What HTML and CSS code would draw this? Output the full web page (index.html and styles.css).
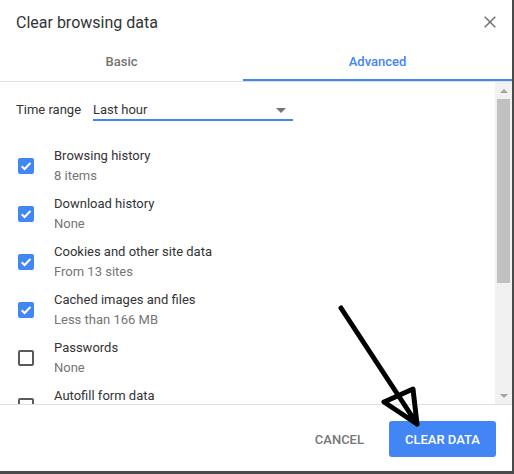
FILE: index.html
```html
<!DOCTYPE html>
<html>
<head>
<meta charset="utf-8">
<link rel="stylesheet" href="styles.css">
</head>
<body>
<div class="dialog">
  <div class="header">
    <span class="title">Clear browsing data</span>
    <svg class="close" width="12" height="12" viewBox="0 0 12 12"><path d="M0.7 0.7 L11.3 11.3 M11.3 0.7 L0.7 11.3" stroke="#757575" stroke-width="1.6" fill="none"/></svg>
  </div>
  <div class="tabs">
    <div class="tab basic">Basic</div>
    <div class="tab active">Advanced</div>
  </div>
  <div class="body">
    <div class="scroll">
      <div class="time-row">
        <span class="label">Time range</span>
        <div class="select"><span>Last hour</span><span class="caret"></span></div>
      </div>
      <div class="item">
        <span class="cb checked"><svg width="16" height="16" viewBox="0 0 16 16"><path d="M3.6 8.2 L6.6 11 L12.4 5" stroke="#fff" stroke-width="2" fill="none"/></svg></span>
        <div class="text"><div class="name">Browsing history</div><div class="sub">8 items</div></div>
      </div>
      <div class="item">
        <span class="cb checked"><svg width="16" height="16" viewBox="0 0 16 16"><path d="M3.6 8.2 L6.6 11 L12.4 5" stroke="#fff" stroke-width="2" fill="none"/></svg></span>
        <div class="text"><div class="name">Download history</div><div class="sub">None</div></div>
      </div>
      <div class="item">
        <span class="cb checked"><svg width="16" height="16" viewBox="0 0 16 16"><path d="M3.6 8.2 L6.6 11 L12.4 5" stroke="#fff" stroke-width="2" fill="none"/></svg></span>
        <div class="text"><div class="name">Cookies and other site data</div><div class="sub">From 13 sites</div></div>
      </div>
      <div class="item">
        <span class="cb checked"><svg width="16" height="16" viewBox="0 0 16 16"><path d="M3.6 8.2 L6.6 11 L12.4 5" stroke="#fff" stroke-width="2" fill="none"/></svg></span>
        <div class="text"><div class="name">Cached images and files</div><div class="sub">Less than 166 MB</div></div>
      </div>
      <div class="item">
        <span class="cb"></span>
        <div class="text"><div class="name">Passwords</div><div class="sub">None</div></div>
      </div>
      <div class="item">
        <span class="cb"></span>
        <div class="text"><div class="name">Autofill form data</div></div>
      </div>
    </div>
    <div class="scrollbar">
      <div class="sb-btn"><span class="tri up"></span></div>
      <div class="thumb"></div>
      <div class="track"></div>
      <div class="sb-btn"><span class="tri down"></span></div>
    </div>
  </div>
  <div class="footer">
    <button class="btn cancel">CANCEL</button>
    <button class="btn primary">CLEAR DATA</button>
  </div>
</div>
<svg class="annotation" width="514" height="474" viewBox="0 0 514 474">
  <path d="M341 308 L417 424 M417 424 L384 402 L413 389 Z" stroke="#000" stroke-width="5" fill="none" stroke-linecap="round" stroke-linejoin="round"/>
</svg>
</body>
</html>
```
FILE: styles.css
```css
html, body {
  margin: 0;
  padding: 0;
}
body {
  width: 514px;
  height: 474px;
  background: #4a4a4a;
  font-family: Roboto, "Liberation Sans", sans-serif;
  font-size: 13px;
  color: #333;
  overflow: hidden;
  position: relative;
}
.dialog {
  width: 512px;
  height: 471px;
  background: #fff;
  display: flex;
  flex-direction: column;
}
.header {
  height: 44px;
  display: flex;
  align-items: center;
  justify-content: space-between;
  padding: 0 16px;
  flex-shrink: 0;
}
.title {
  font-size: 16px;
  color: #333;
}
.close {
  display: block;
}
.tabs {
  height: 37px;
  display: flex;
  border-bottom: 1px solid #e0e0e0;
  flex-shrink: 0;
}
.tab {
  display: flex;
  align-items: center;
  justify-content: center;
  padding-bottom: 3px;
  box-sizing: border-box;
  font-weight: 500;
  color: #737373;
}
.tab.basic {
  width: 243px;
}
.tab.active {
  flex: 1;
  color: #4285f4;
  box-shadow: inset 0 -2px 0 #4285f4;
}
.body {
  height: 322px;
  display: flex;
  border-bottom: 1px solid #e0e0e0;
  flex-shrink: 0;
}
.scroll {
  flex: 1;
  overflow: hidden;
  padding-top: 16px;
}
.time-row {
  display: flex;
  padding-left: 16px;
  height: 23px;
}
.label {
  padding-top: 2px;
  line-height: 19px;
  width: 77px;
}
.select {
  width: 200px;
  box-sizing: border-box;
  padding-top: 2px;
  line-height: 19px;
  border-bottom: 2px solid #4285f4;
  display: flex;
  justify-content: space-between;
  align-items: center;
  padding-right: 7px;
}
.caret {
  width: 0;
  height: 0;
  border-left: 5px solid transparent;
  border-right: 5px solid transparent;
  border-top: 5px solid #757575;
  margin-top: 1px;
}
.item {
  display: flex;
  height: 48px;
  box-sizing: border-box;
  padding: 5px 0 3px;
}
.time-row + .item {
  margin-top: 20px;
}
.cb {
  width: 16px;
  height: 16px;
  box-sizing: border-box;
  border: 2px solid #5a5a5a;
  border-radius: 2px;
  margin: 12px 20px 0 18px;
  flex-shrink: 0;
  position: relative;
}
.cb.checked {
  background: #4285f4;
  border: none;
}
.cb svg {
  display: block;
}
.name {
  line-height: 20px;
  color: #333;
}
.sub {
  line-height: 20px;
  color: #757575;
}
.scrollbar {
  width: 17px;
  background: #f1f1f1;
  display: flex;
  flex-direction: column;
  align-items: center;
}
.sb-btn {
  height: 17px;
  width: 17px;
  display: flex;
  align-items: center;
  justify-content: center;
  flex-shrink: 0;
}
.tri {
  width: 0;
  height: 0;
  border-left: 4px solid transparent;
  border-right: 4px solid transparent;
}
.tri.up {
  border-bottom: 4px solid #a3a3a3;
}
.tri.down {
  border-top: 4px solid #a3a3a3;
}
.thumb {
  width: 13px;
  height: 184px;
  background: #c1c1c1;
}
.track {
  flex: 1;
}
.footer {
  flex: 1;
  display: flex;
  justify-content: flex-end;
  align-items: flex-start;
  padding: 16px 16px 0 0;
  gap: 9px;
}
.btn {
  font-family: Roboto, "Liberation Sans", sans-serif;
  font-size: 13px;
  font-weight: 500;
  height: 36px;
  padding: 0 16px;
  border: none;
  border-radius: 3px;
  background: transparent;
}
.btn.cancel {
  color: #757575;
}
.btn.primary {
  background: #4285f4;
  color: #fff;
}
.annotation {
  position: absolute;
  left: 0;
  top: 0;
  pointer-events: none;
}
```
